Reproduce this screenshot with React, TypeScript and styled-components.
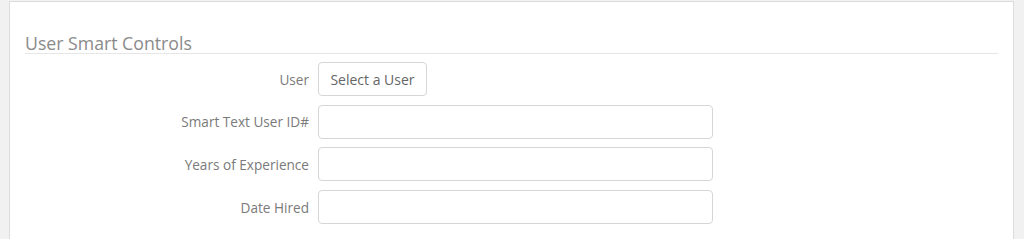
import React from "react";
import styled, { createGlobalStyle } from "styled-components";

const Global = createGlobalStyle`
  html, body {
    margin: 0;
    padding: 0;
    background: #f1f1f1;
    font-family: "Open Sans", "Liberation Sans", sans-serif;
  }
`;

const Panel = styled.div`
  margin: 1px 0 0 9px;
  width: 1005px;
  height: 238px;
  background: #ffffff;
  border: 1px solid #dcdcdc;
  border-bottom: none;
  box-sizing: border-box;
  padding: 31px 15px 0 15px;
`;

const Heading = styled.h3`
  margin: 0;
  font-size: 17.7px;
  font-weight: 400;
  color: #8a8a8a;
  line-height: 20px;
  padding-bottom: 0;
  border-bottom: 1px solid #e6e6e6;
`;

const Form = styled.div`
  display: grid;
  grid-template-columns: 284px 395px;
  column-gap: 9px;
  row-gap: 8.7px;
  margin-top: 8px;
  align-items: center;
`;

const Label = styled.label`
  text-align: right;
  font-size: 13.6px;
  color: #7a7a7a;
`;

const Button = styled.button`
  justify-self: start;
  width: 109px;
  height: 34px;
  border: 1px solid #d6d6d6;
  border-radius: 4px;
  background: #ffffff;
  font-family: "Open Sans", "Liberation Sans", sans-serif;
  font-size: 14px;
  color: #666666;
  padding: 0;
`;

const Input = styled.input`
  box-sizing: border-box;
  width: 395px;
  height: 34px;
  border: 1px solid #d6d6d6;
  border-radius: 4px;
  background: #ffffff;
  font-family: "Open Sans", "Liberation Sans", sans-serif;
  font-size: 14px;
  outline: none;
`;

export default function App() {
  return (
    <>
      <Global />
      <Panel>
        <Heading>User Smart Controls</Heading>
        <Form>
          <Label>User</Label>
          <Button>Select a User</Button>
          <Label>Smart Text User ID#</Label>
          <Input />
          <Label>Years of Experience</Label>
          <Input />
          <Label>Date Hired</Label>
          <Input />
        </Form>
      </Panel>
    </>
  );
}
